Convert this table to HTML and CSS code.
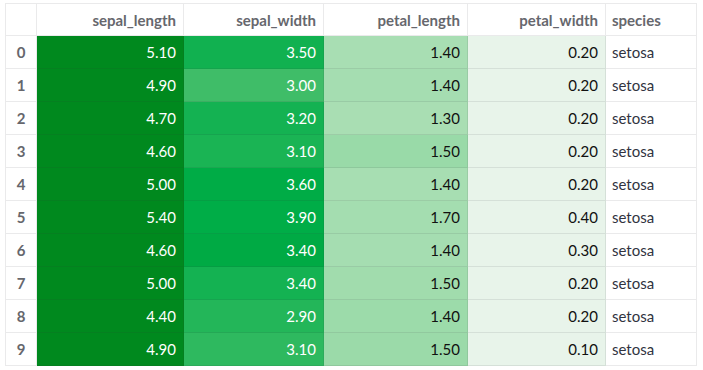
FILE: index.html
```html
<!DOCTYPE html>
<html>
<head>
<meta charset="utf-8">
<link rel="stylesheet" href="styles.css">
</head>
<body>
<div class="grid">
  <div class="h idx"></div><div class="h num">sepal_length</div><div class="h num">sepal_width</div><div class="h num">petal_length</div><div class="h num">petal_width</div><div class="h txt">species</div>

  <div class="idx">0</div><div class="c w" style="background:#00891e">5.10</div><div class="c w" style="background:#11b150">3.50</div><div class="c b" style="background:#a8deb3">1.40</div><div class="c b" style="background:#e8f4ea">0.20</div><div class="s">setosa</div>
  <div class="idx">1</div><div class="c w" style="background:#00891e">4.90</div><div class="c w" style="background:#3fbd68">3.00</div><div class="c b" style="background:#a5ddb1">1.40</div><div class="c b" style="background:#e8f4ea">0.20</div><div class="s">setosa</div>
  <div class="idx">2</div><div class="c w" style="background:#00891e">4.70</div><div class="c w" style="background:#14b252">3.20</div><div class="c b" style="background:#a9deb3">1.30</div><div class="c b" style="background:#e8f4ea">0.20</div><div class="s">setosa</div>
  <div class="idx">3</div><div class="c w" style="background:#00891e">4.60</div><div class="c w" style="background:#1ab454">3.10</div><div class="c b" style="background:#99daa8">1.50</div><div class="c b" style="background:#e8f4ea">0.20</div><div class="s">setosa</div>
  <div class="idx">4</div><div class="c w" style="background:#00891e">5.00</div><div class="c w" style="background:#00ac46">3.60</div><div class="c b" style="background:#a7deb2">1.40</div><div class="c b" style="background:#e8f4ea">0.20</div><div class="s">setosa</div>
  <div class="idx">5</div><div class="c w" style="background:#00891e">5.40</div><div class="c w" style="background:#00ad47">3.90</div><div class="c b" style="background:#a4ddb0">1.70</div><div class="c b" style="background:#e8f4ea">0.40</div><div class="s">setosa</div>
  <div class="idx">6</div><div class="c w" style="background:#00891e">4.60</div><div class="c w" style="background:#00aa44">3.40</div><div class="c b" style="background:#a5ddb1">1.40</div><div class="c b" style="background:#e8f4ea">0.30</div><div class="s">setosa</div>
  <div class="idx">7</div><div class="c w" style="background:#00891e">5.00</div><div class="c w" style="background:#14b252">3.40</div><div class="c b" style="background:#a1dcad">1.50</div><div class="c b" style="background:#e8f4ea">0.20</div><div class="s">setosa</div>
  <div class="idx">8</div><div class="c w" style="background:#00891e">4.40</div><div class="c w" style="background:#23b659">2.90</div><div class="c b" style="background:#9cdbaa">1.40</div><div class="c b" style="background:#e8f4ea">0.20</div><div class="s">setosa</div>
  <div class="idx">9</div><div class="c w" style="background:#00891e">4.90</div><div class="c w" style="background:#2eb95f">3.10</div><div class="c b" style="background:#9bdaa9">1.50</div><div class="c b" style="background:#e8f4ea">0.10</div><div class="s">setosa</div>
</div>
</body>
</html>
```
FILE: styles.css
```css
html, body {
  margin: 0;
  padding: 0;
  background: #ffffff;
}
body {
  padding: 3px 0 0 5px;
  font-family: Lato, "Liberation Sans", sans-serif;
  font-size: 15px;
}
.grid {
  display: grid;
  grid-template-columns: 31px 147px 140px 144px 138px 91px;
  grid-template-rows: 32px repeat(10, 33px);
  width: max-content;
  border-top: 1px solid rgba(49, 51, 63, 0.1);
  border-left: 1px solid rgba(49, 51, 63, 0.1);
}
.grid > div {
  box-sizing: border-box;
  border-right: 1px solid rgba(49, 51, 63, 0.1);
  border-bottom: 1px solid rgba(49, 51, 63, 0.1);
  display: flex;
  align-items: center;
  white-space: nowrap;
}
.h {
  font-weight: 700;
  color: #66676d;
}
.num {
  justify-content: flex-end;
  padding-right: 7px;
}
.txt {
  padding-left: 6px;
}
.idx {
  justify-content: center;
  font-weight: 700;
  color: #66676d;
}
.c {
  justify-content: flex-end;
  padding-right: 7px;
}
.w { color: #ffffff; }
.b { color: #111111; }
.s {
  padding-left: 6px;
  color: #31333f;
}
```
